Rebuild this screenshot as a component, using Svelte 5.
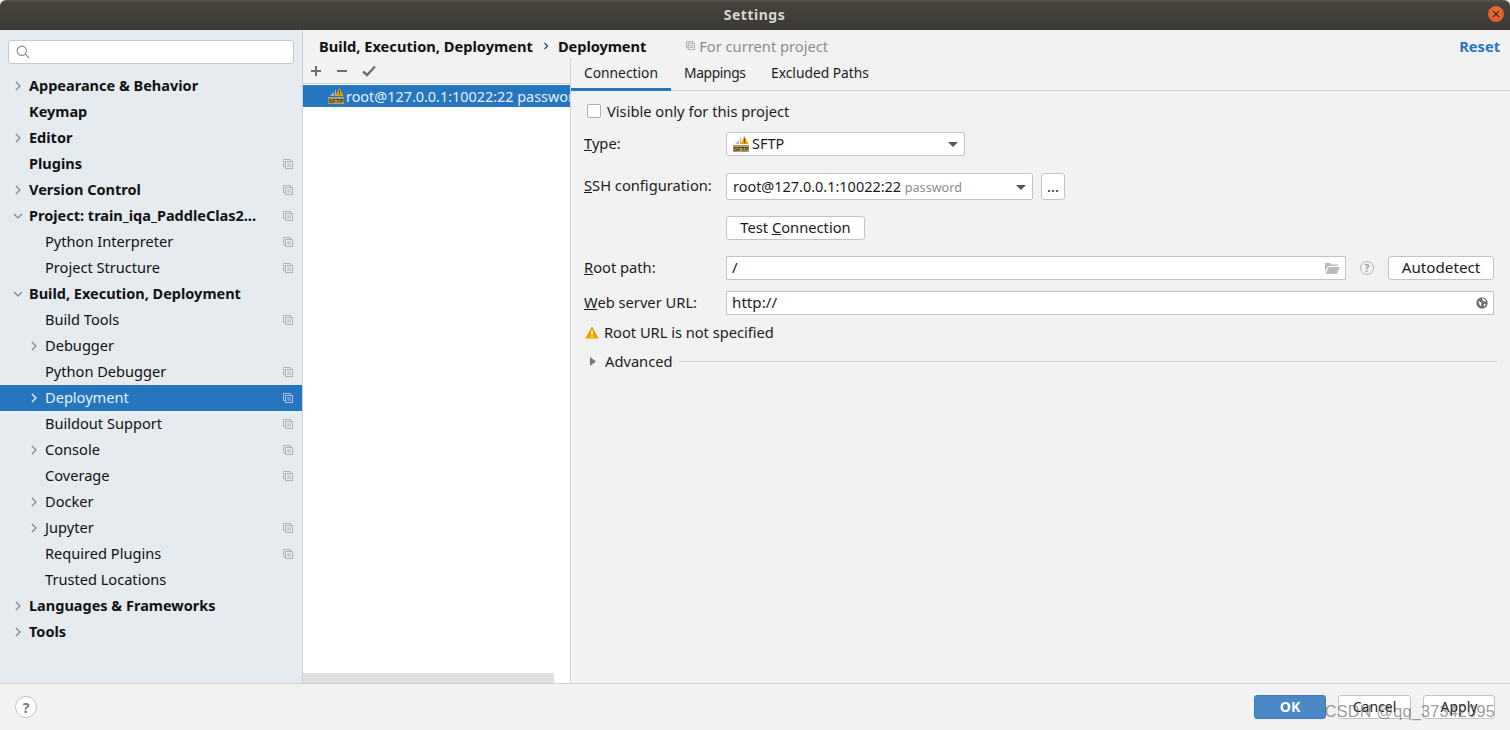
<script>
  const rows = [
    { t: 'Appearance & Behavior', b: 1, a: 'r' },
    { t: 'Keymap', b: 1 },
    { t: 'Editor', b: 1, a: 'r' },
    { t: 'Plugins', b: 1, c: 1 },
    { t: 'Version Control', b: 1, a: 'r', c: 1 },
    { t: 'Project: train_iqa_PaddleClas2...', b: 1, a: 'd', c: 1 },
    { t: 'Python Interpreter', c: 1 },
    { t: 'Project Structure', c: 1 },
    { t: 'Build, Execution, Deployment', b: 1, a: 'd' },
    { t: 'Build Tools', c: 1 },
    { t: 'Debugger', a: 'r' },
    { t: 'Python Debugger', c: 1 },
    { t: 'Deployment', a: 'r', c: 1, s: 1 },
    { t: 'Buildout Support', c: 1 },
    { t: 'Console', a: 'r', c: 1 },
    { t: 'Coverage', c: 1 },
    { t: 'Docker', a: 'r' },
    { t: 'Jupyter', a: 'r', c: 1 },
    { t: 'Required Plugins', c: 1 },
    { t: 'Trusted Locations' },
    { t: 'Languages & Frameworks', b: 1, a: 'r' },
    { t: 'Tools', b: 1, a: 'r' }
  ];
</script>

{#snippet copy(cls)}
  <svg class={cls} width="10" height="10" viewBox="0 0 10 10" fill="none" stroke="currentColor">
    <path d="M2.5 7.5H.5V.5H7.5V2.5" />
    <rect x="2.5" y="2.5" width="7" height="7" />
    <path d="M4 5H8M4 7H8" />
  </svg>
{/snippet}

{#snippet sftp()}
  <svg class="sftp" width="16" height="16" viewBox="0 0 16 16">
    <path d="M2 8 L6 4 V8Z M7 8 V2 H8 V8Z" fill="#b4b8bd" />
    <path d="M11.5 0 L15.5 8 H7.5Z" fill="#eda200" />
    <path d="M11 2.5H12V5.5H11ZM11 6H12V7H11Z" fill="#5a4300" />
    <rect x="0" y="9" width="16" height="7" fill="#b59e62" />
    <text x="8" y="15" text-anchor="middle" class="sftptext">SFTP</text>
  </svg>
{/snippet}

<div class="window">
  <header class="titlebar">
    <span class="title">Settings</span>
    <span class="close">
      <svg width="8" height="8" viewBox="0 0 8 8" stroke="#3a2a20" stroke-width="1.1"><path d="M1 1L7 7M7 1L1 7" /></svg>
    </span>
  </header>

  <div class="body">
    <aside class="sidebar">
      <div class="search">
        <svg width="14" height="14" viewBox="0 0 14 14" fill="none" stroke="#8c8c8c" stroke-width="1.2">
          <circle cx="5.8" cy="5.8" r="4.6" /><path d="M9.2 9.2L13 13" />
        </svg>
      </div>
      <nav class="tree">
        {#each rows as r}
          <div class="row" class:sel={r.s} class:bold={r.b}>
            <span class="arrow" class:sub={!r.b}>
              {#if r.a === 'r'}
                <svg width="8" height="10" viewBox="0 0 8 10" fill="none" stroke="currentColor" stroke-width="1.1"><path d="M2 1L6 5L2 9" /></svg>
              {:else if r.a === 'd'}
                <svg width="10" height="8" viewBox="0 0 10 8" fill="none" stroke="currentColor" stroke-width="1.1"><path d="M1 2L5 6L9 2" /></svg>
              {/if}
            </span>
            <span class="label">{r.t}</span>
            {#if r.c}{@render copy('rowcopy')}{/if}
          </div>
        {/each}
      </nav>
    </aside>

    <main class="content">
      <div class="crumbs">
        <b>Build, Execution, Deployment</b>
        <svg class="sep" width="6" height="8" viewBox="0 0 6 8" fill="none" stroke="#333" stroke-width="1.1"><path d="M1.5 1L4.5 4L1.5 7" /></svg>
        <b class="leaf">Deployment</b>
        <span class="scope">{@render copy('scopecopy')}For current project</span>
        <a class="reset" href="#reset">Reset</a>
      </div>

      <div class="split">
        <section class="servers">
          <div class="toolbar">
            <svg width="12" height="12" viewBox="0 0 12 12" stroke="#6e6e6e" stroke-width="2"><path d="M1 6H11M6 1V11" /></svg>
            <svg width="12" height="12" viewBox="0 0 12 12" stroke="#6e6e6e" stroke-width="2"><path d="M1 6H11" /></svg>
            <svg width="14" height="12" viewBox="0 0 14 12" fill="none" stroke="#6e6e6e" stroke-width="2.4"><path d="M1 6.5L5 10L13 1.5" /></svg>
          </div>
          <div class="list">
            <div class="server">{@render sftp()}<span class="servername">root@127.0.0.1:10022:22 password</span></div>
          </div>
          <div class="hscroll"></div>
        </section>

        <section class="detail">
          <div class="tabs">
            <span class="tab active t1">Connection</span>
            <span class="tab t2">Mappings</span>
            <span class="tab">Excluded Paths</span>
          </div>

          <div class="form">
            <label class="check"><span class="box"></span>Visible only for this project</label>

            <div class="field f-type">
              <span class="lab"><u>T</u>ype:</span>
              <div class="combo c-type">{@render sftp()}<span>SFTP</span><i class="caret"></i></div>
            </div>

            <div class="field f-ssh">
              <span class="lab"><u>S</u>SH configuration:</span>
              <div class="combo c-ssh"><span>root@127.0.0.1:10022:22 <small>password</small></span><i class="caret"></i></div>
              <button class="btn dots">...</button>
            </div>

            <div class="field f-test">
              <span class="lab"></span>
              <button class="btn test">Test <u>C</u>onnection</button>
            </div>

            <div class="field f-root">
              <span class="lab"><u>R</u>oot path:</span>
              <div class="input grow">
                <span class="val">/</span>
                <svg width="15" height="12" viewBox="0 0 15 12" fill="#b9bdc0"><path d="M0 1H5L6.5 2.5H13V4H3L0 10Z" /><path d="M3.6 5H15L12 12H.6Z" /></svg>
              </div>
              <span class="help">?</span>
              <button class="btn auto">Autodetect</button>
            </div>

            <div class="field f-web">
              <span class="lab"><u>W</u>eb server URL:</span>
              <div class="input grow">
                <span class="val">http://</span>
                <svg width="12" height="12" viewBox="0 0 12 12"><circle cx="6" cy="6" r="5.7" fill="#6e6e6e" /><path d="M6 1.2C8 1.5 9.6 2.6 10.2 4.2L7.8 4.6L6.4 3ZM2.4 3.6L5.4 5.8L5 9.4L3.4 7.6Z M7.6 7H10L8 10Z" fill="#fff" /></svg>
              </div>
            </div>

            <div class="warn">
              <svg width="14" height="13" viewBox="0 0 14 13"><path d="M7 .5L13.8 12.5H.2Z" fill="#eda200" /><path d="M6.2 4.5H7.8V8.8H6.2ZM6.2 9.7H7.8V11.2H6.2Z" fill="#fff" /></svg>
              <span>Root URL is not specified</span>
            </div>

            <div class="advanced">
              <svg width="6" height="9" viewBox="0 0 6 9" fill="#777"><path d="M0 0L6 4.5L0 9Z" /></svg>
              <span>Advanced</span>
              <i class="rule"></i>
            </div>
          </div>
        </section>
      </div>
    </main>
  </div>

  <footer class="footer">
    <span class="qmark">?</span>
    <div class="actions">
      <button class="btn ok">OK</button>
      <button class="btn cancel">Cancel</button>
      <button class="btn apply">Apply</button>
    </div>
    <span class="watermark">CSDN @qq_37342095</span>
  </footer>
</div>

<style>
  :global(body) {
    margin: 0;
    overflow: hidden;
    background: #f2f2f2;
  }
  .window {
    width: 1510px;
    height: 730px;
    display: flex;
    flex-direction: column;
    font-family: "Noto Sans", "Open Sans", sans-serif;
    font-size: 14px;
    color: #1c1c1c;
    background: #f2f2f2;
  }
  .titlebar {
    height: 30px;
    flex: none;
    position: relative;
    display: flex;
    align-items: center;
    justify-content: center;
    background: linear-gradient(#57544c, #45423b 12%, #3c3b37);
    border-radius: 6px 6px 0 0;
    box-sizing: border-box;
    padding-bottom: 2px;
  }
  .title {
    color: #d6d5d0;
    font-weight: 700;
    font-size: 14px;
    letter-spacing: 0.5px;
    margin-right: 1px;
  }
  .close {
    position: absolute;
    right: 6px;
    top: 6px;
    width: 16px;
    height: 16px;
    border-radius: 50%;
    background: radial-gradient(circle at 50% 40%, #f0703a, #dc4f1c);
    display: flex;
    align-items: center;
    justify-content: center;
  }
  .body {
    flex: 1;
    display: flex;
    min-height: 0;
    border-bottom: 1px solid #d1d1d1;
  }
  .sidebar {
    width: 302px;
    flex: none;
    box-sizing: content-box;
    background: #e6ebf0;
    border-right: 1px solid #d1d1d1;
  }
  .search {
    margin: 10px 8px 0;
    height: 24px;
    box-sizing: border-box;
    background: #fff;
    border: 1px solid #c9c9c9;
    border-radius: 3px;
    display: flex;
    align-items: center;
    padding-left: 7px;
  }
  .tree {
    margin-top: 9px;
  }
  .row {
    height: 26px;
    display: flex;
    align-items: center;
    color: #111;
    font-size: 14.6px;
    line-height: 24px;
    position: relative;
  }
  .row.bold {
    font-weight: 700;
    font-size: 14.5px;
  }
  .row.sel {
    background: #2675bf;
    color: #e8f1fa;
  }
  .arrow {
    width: 14px;
    margin-left: 11px;
    margin-right: 4px;
    display: flex;
    justify-content: center;
    color: #7f7f7f;
    flex: none;
  }
  .arrow.sub {
    margin-left: 27px;
  }
  .sel .arrow {
    color: #fff;
  }
  .label {
    flex: 1;
    padding-bottom: 2px;
  }
  .rowcopy {
    color: #aeb3b8;
    margin-right: 9px;
  }
  .sel .rowcopy {
    color: #a9c6e4;
  }
  .content {
    flex: 1;
    min-width: 0;
    display: flex;
    flex-direction: column;
  }
  .crumbs {
    height: 28px;
    flex: none;
    display: flex;
    align-items: center;
    padding: 3px 10px 0 16px;
    box-sizing: border-box;
    font-size: 14.65px;
    color: #111;
  }
  .sep {
    margin: 0 9px 0 10px;
  }
  .leaf {
    letter-spacing: -0.1px;
  }
  .scope {
    margin-left: 40px;
    color: #8c8c8c;
    font-size: 14.7px;
    display: flex;
    align-items: center;
  }
  .scopecopy {
    color: #a8a8a8;
    width: 9px;
    height: 9px;
    margin-right: 4px;
  }
  .reset {
    margin-left: auto;
    color: #2675bf;
    font-weight: 700;
    text-decoration: none;
  }
  .split {
    flex: 1;
    display: flex;
    min-height: 0;
  }
  .servers {
    width: 267px;
    flex: none;
    border-right: 1px solid #d1d1d1;
    display: flex;
    flex-direction: column;
    background: #fff;
    overflow: hidden;
  }
  .toolbar {
    height: 25px;
    flex: none;
    background: #f2f2f2;
    border-bottom: 1px solid #d1d1d1;
    display: flex;
    align-items: center;
    gap: 14px;
    padding-left: 7px;
  }
  .list {
    flex: 1;
    padding-top: 1px;
    min-height: 0;
  }
  .server {
    height: 22px;
    background: #2675bf;
    color: #e6f0f9;
    display: flex;
    align-items: center;
    padding-left: 25px;
    white-space: nowrap;
    font-size: 14.4px;
  }
  .sftp {
    flex: none;
    margin-right: 2px;
  }
  .sftptext {
    font-family: "Liberation Sans", sans-serif;
    font-size: 6px;
    font-weight: 700;
    fill: #3c3222;
  }
  .hscroll {
    height: 10px;
    width: 251px;
    flex: none;
    background: #e0e0e0;
  }
  .detail {
    flex: 1;
    min-width: 0;
  }
  .tabs {
    height: 33px;
    box-sizing: border-box;
    border-bottom: 1px solid #d1d1d1;
    display: flex;
    font-size: 13.8px;
  }
  .tab {
    padding: 0 13px;
    height: 33px;
    line-height: 29px;
    box-sizing: border-box;
    color: #1c1c1c;
    white-space: nowrap;
  }
  .t1 {
    width: 100px;
  }
  .t2 {
    width: 87px;
    letter-spacing: -0.35px;
  }
  .tab.active {
    border-bottom: 3px solid #2675bf;
  }
  .form {
    font-size: 14.7px;
    padding: 0 16px 0 13px;
  }
  .check {
    display: flex;
    align-items: center;
    height: 20px;
    margin-top: 10px;
    margin-left: 3px;
  }
  .box {
    width: 14px;
    height: 14px;
    box-sizing: border-box;
    background: #fff;
    border: 1px solid #b0b0b0;
    border-radius: 2px;
    margin-right: 6px;
  }
  .field {
    display: flex;
    align-items: center;
  }
  .lab {
    width: 142px;
    flex: none;
    padding-bottom: 2px;
    box-sizing: border-box;
  }
  .f-ssh .lab {
    padding-bottom: 4px;
  }
  .f-type { margin-top: 11px; }
  .f-ssh { margin-top: 17px; }
  .f-test { margin-top: 16px; }
  .f-root { margin-top: 16px; }
  .f-web { margin-top: 11px; }
  .combo {
    box-sizing: border-box;
    display: flex;
    align-items: center;
    background: #fff;
    border: 1px solid #c4c4c4;
    border-radius: 2px;
    position: relative;
    font-size: 14.45px;
  }
  .c-type {
    width: 239px;
    height: 24px;
    padding-left: 6px;
  }
  .c-type > span {
    margin-left: 1px;
    padding-bottom: 2px;
  }
  .c-ssh {
    width: 307px;
    height: 27px;
    padding-left: 6px;
  }
  small {
    color: #8c8c8c;
    font-size: 12.6px;
  }
  .caret {
    position: absolute;
    right: 6px;
    top: 50%;
    margin-top: -2px;
    border-left: 5px solid transparent;
    border-right: 5px solid transparent;
    border-top: 5px solid #555;
  }
  .btn {
    font: inherit;
    box-sizing: border-box;
    background: #fff;
    border: 1px solid #c4c4c4;
    border-radius: 3px;
    color: #1c1c1c;
    padding: 0 0 2px;
    height: 24px;
  }
  .dots {
    width: 24px;
    height: 27px;
    margin-left: 8px;
  }
  .test {
    width: 139px;
  }
  .input {
    height: 24px;
    box-sizing: border-box;
    background: #fff;
    border: 1px solid #c4c4c4;
    display: flex;
    align-items: center;
    justify-content: space-between;
    padding: 0 5px 0 5px;
    font-size: 15.2px;
  }
  .val {
    padding-bottom: 2px;
  }
  .grow {
    flex: 1;
  }
  .help {
    width: 14px;
    height: 14px;
    margin: 0 14px 0 14px;
    flex: none;
    box-sizing: border-box;
    border: 1px solid #b5b5b5;
    border-radius: 50%;
    color: #9a9a9a;
    font-size: 10px;
    font-weight: 700;
    display: flex;
    align-items: center;
    justify-content: center;
  }
  .auto {
    width: 106px;
    flex: none;
    font-size: 15.2px;
  }
  .warn {
    display: flex;
    align-items: center;
    gap: 5px;
    height: 20px;
    margin-top: 7px;
    margin-left: 1px;
  }
  .warn span {
    letter-spacing: -0.03px;
  }
  .advanced {
    display: flex;
    align-items: center;
    height: 20px;
    margin-top: 9px;
    margin-left: 6px;
    margin-right: -3px;
  }
  .advanced span {
    margin-left: 9px;
  }
  .rule {
    flex: 1;
    height: 1px;
    background: #d1d1d1;
    margin-left: 6px;
  }
  .footer {
    height: 46px;
    flex: none;
    position: relative;
    display: flex;
    align-items: center;
    justify-content: space-between;
    padding: 0 15px;
    box-sizing: border-box;
  }
  .qmark {
    width: 22px;
    height: 22px;
    box-sizing: border-box;
    border: 1px solid #c4c4c4;
    border-radius: 50%;
    background: #fff;
    color: #7a7a7a;
    font-weight: 700;
    font-size: 14px;
    display: flex;
    align-items: center;
    justify-content: center;
  }
  .actions {
    display: flex;
    gap: 12px;
  }
  .ok {
    width: 72px;
    background: #4a88c7;
    border-color: #3f7ab6;
    color: #fff;
    font-weight: 700;
  }
  .cancel {
    width: 73px;
  }
  .apply {
    width: 72px;
  }
  .watermark {
    position: absolute;
    right: 15px;
    top: 18px;
    font-family: "Liberation Sans", sans-serif;
    font-size: 16.3px;
    color: rgba(90, 90, 90, 0.62);
    letter-spacing: 0.2px;
    white-space: nowrap;
  }
</style>
